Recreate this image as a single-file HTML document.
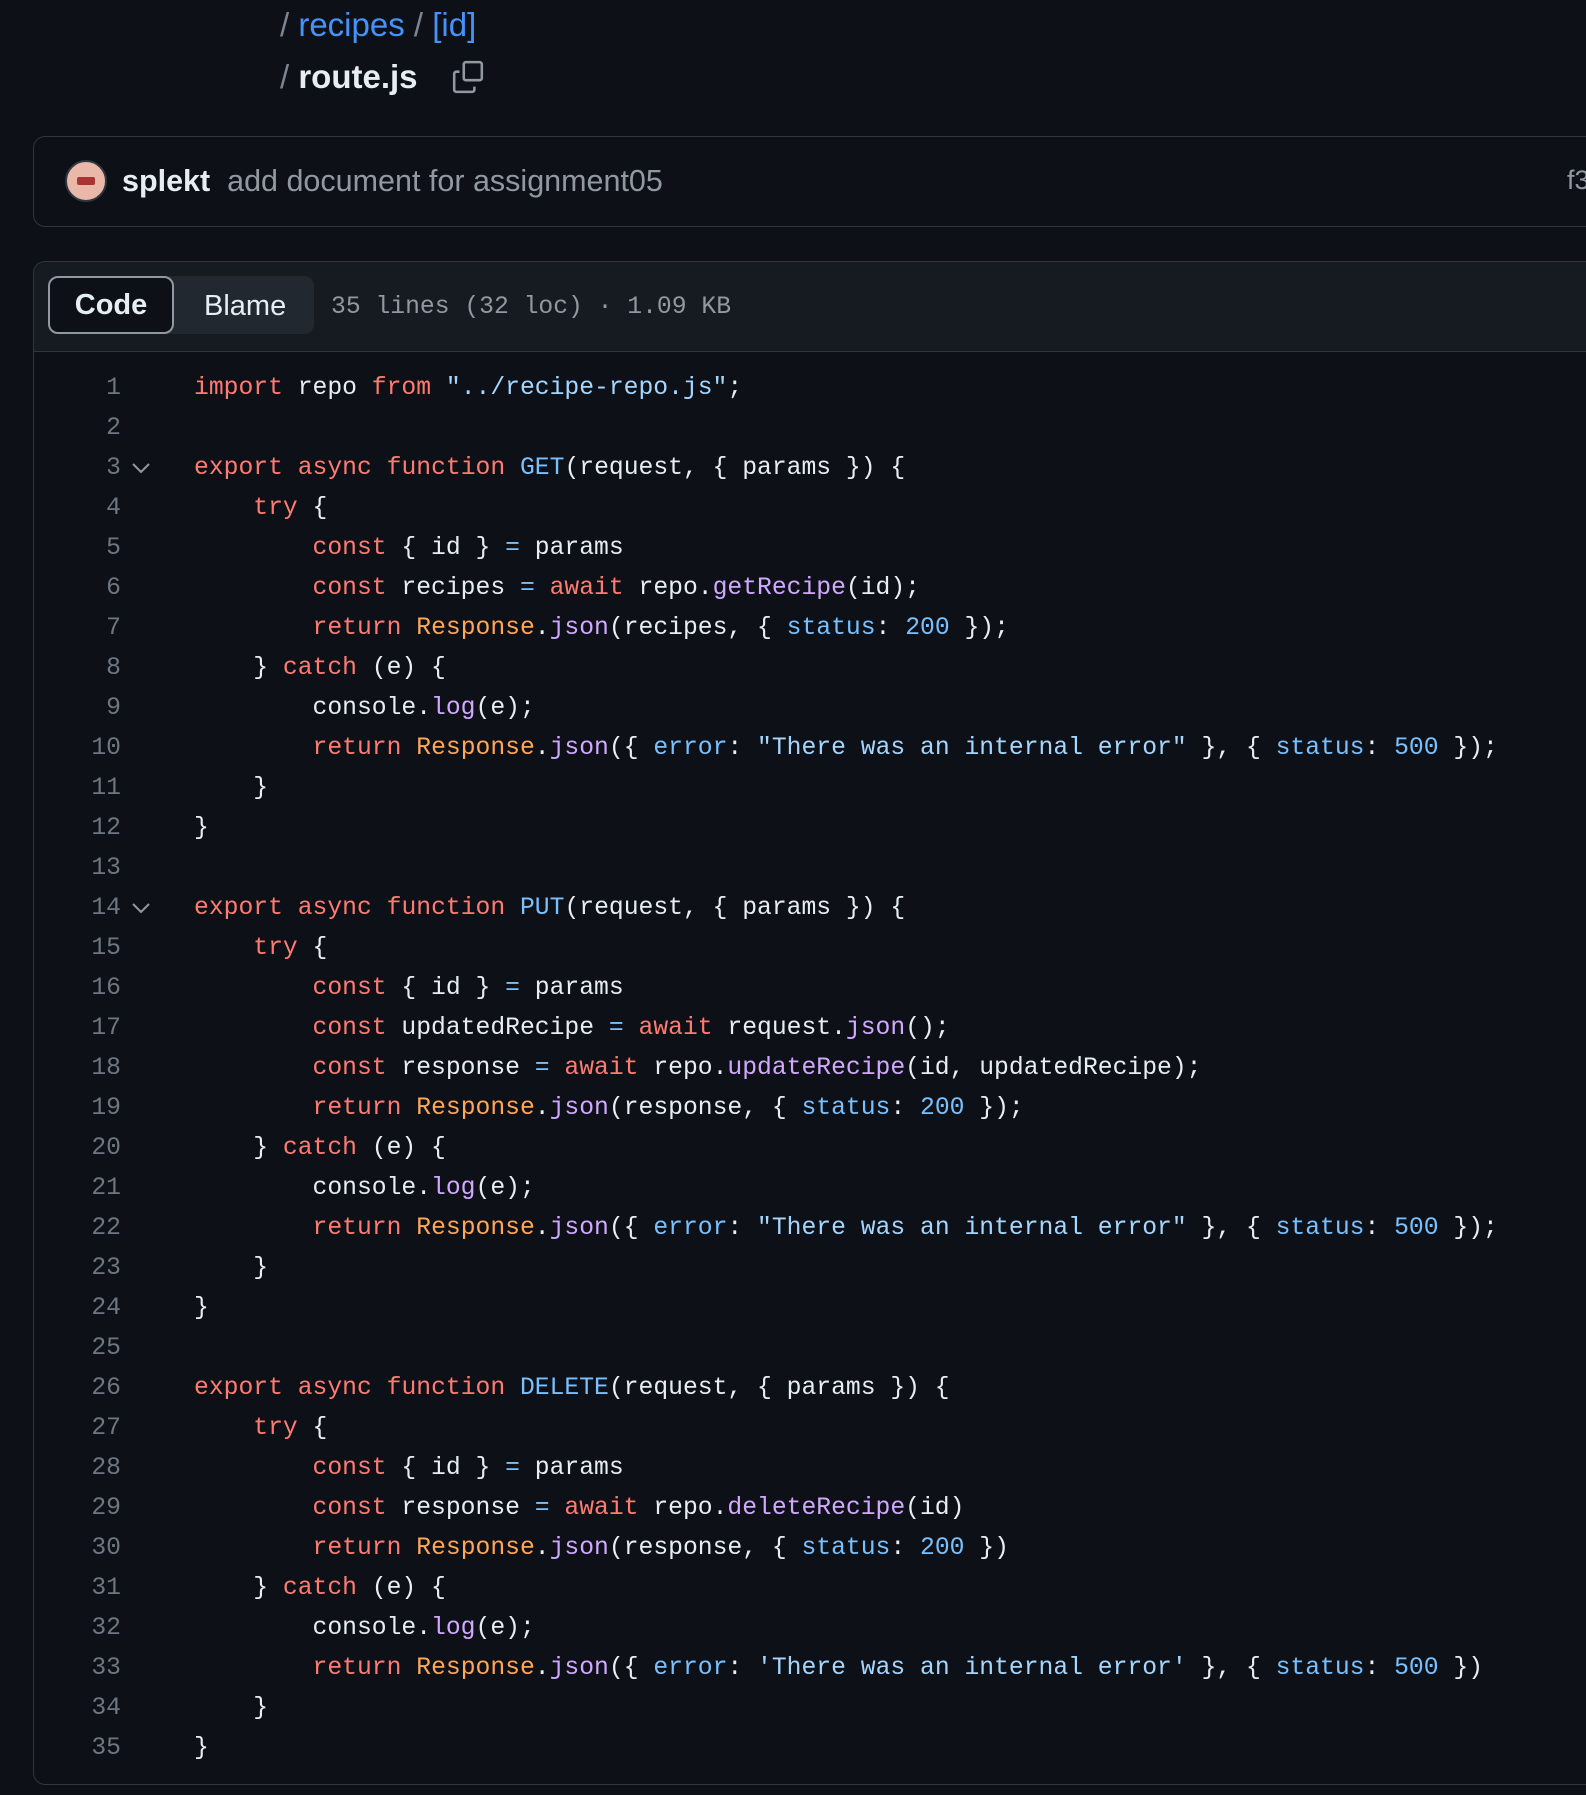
<!DOCTYPE html>
<html><head><meta charset="utf-8"><style>
*{margin:0;padding:0;box-sizing:border-box}
body{width:1586px;height:1795px;background:#0d1117;overflow:hidden;position:relative;font-family:"Liberation Sans",sans-serif;color:#e6edf3}
.abs{position:absolute;white-space:pre}
.crumb{font-size:33px;line-height:40px}
.sep{color:#7d8590}
.lnk{color:#4493f8}
.box1{position:absolute;left:33px;top:136px;width:1600px;height:91px;border:1.5px solid #30363d;border-radius:12px}
.box2{position:absolute;left:33px;top:261px;width:1600px;height:1524px;border:1.5px solid #30363d;border-radius:12px;overflow:hidden}
.hdr{position:absolute;left:0;top:0;right:0;height:90px;background:#161b22;border-bottom:1.5px solid #30363d}
.code{font-family:"Liberation Mono",monospace;font-size:24.7px;line-height:40px}
.ln{position:absolute;left:0;top:0;width:89px;text-align:right;color:#6e7681}
.k{color:#ff7b72}.s{color:#a5d6ff}.b{color:#79c0ff}.p{color:#d2a8ff}.o{color:#ffa657}
</style></head><body>
<div class="abs crumb" style="left:280px;top:5px"><span class="sep">/ </span><span class="lnk">recipes</span><span class="sep"> / </span><span class="lnk">[id]</span></div>
<div class="abs crumb" style="left:280px;top:57px"><span class="sep">/ </span><b>route.js</b></div>
<svg class="abs" style="left:451px;top:60px" width="34" height="34" viewBox="0 0 16 16" fill="none" stroke="#9198a1" stroke-width="1.2"><rect x="6" y="1" width="8.5" height="8.5" rx="1"/><path d="M4 5.5H2.5a1 1 0 0 0-1 1V14a1 1 0 0 0 1 1H10a1 1 0 0 0 1-1v-1.5"/></svg>
<div class="box1"></div>
<div class="abs" style="left:65px;top:160px;width:42px;height:42px;border-radius:50%;background:#e9b8a8;border:2px solid #30363d"><div style="position:absolute;left:10px;top:15px;width:18px;height:8px;background:#a33;border-radius:2px"></div></div>
<div class="abs" style="left:122px;top:162px;font-size:30.5px;line-height:38px"><b>splekt</b>  <span style="color:#9198a1">add document for assignment05</span></div>
<div class="abs" style="left:1567px;top:165px;font-size:27px;color:#9198a1">f3</div>
<div class="box2"><div class="hdr"></div></div>
<div class="abs" style="left:48px;top:276px;width:266px;height:58px;background:#212830;border-radius:10px"></div>
<div class="abs" style="left:48px;top:276px;width:126px;height:58px;background:#0d1117;border:2px solid #9198a1;border-radius:10px;font-size:29px;font-weight:bold;line-height:54px;text-align:center">Code</div>
<div class="abs" style="left:204px;top:277px;font-size:29px;line-height:58px">Blame</div>
<div class="abs code" style="left:331px;top:287px;color:#9198a1">35 lines (32 loc) · 1.09 KB</div>
<svg class="abs" style="left:131px;top:460px" width="22" height="720"><g fill="none" stroke="#9198a1" stroke-width="2"><path d="M2 4l8 8 8-8"/><path d="M2 444l8 8 8-8"/><path d="M2 924l8 8 8-8"/></g></svg>
<div class="abs code" style="left:32px;top:368px"><div class="ln">1
2
3
4
5
6
7
8
9
10
11
12
13
14
15
16
17
18
19
20
21
22
23
24
25
26
27
28
29
30
31
32
33
34
35</div><div style="position:absolute;left:162px;top:0"><span class="k">import</span> repo <span class="k">from</span> <span class="s">"../recipe-repo.js"</span>;

<span class="k">export</span> <span class="k">async</span> <span class="k">function</span> <span class="b">GET</span>(request, { params }) {
    <span class="k">try</span> {
        <span class="k">const</span> { id } <span class="b">=</span> params
        <span class="k">const</span> recipes <span class="b">=</span> <span class="k">await</span> repo.<span class="p">getRecipe</span>(id);
        <span class="k">return</span> <span class="o">Response</span>.<span class="p">json</span>(recipes, { <span class="b">status</span>: <span class="b">200</span> });
    } <span class="k">catch</span> (e) {
        console.<span class="p">log</span>(e);
        <span class="k">return</span> <span class="o">Response</span>.<span class="p">json</span>({ <span class="b">error</span>: <span class="s">"There was an internal error"</span> }, { <span class="b">status</span>: <span class="b">500</span> });
    }
}

<span class="k">export</span> <span class="k">async</span> <span class="k">function</span> <span class="b">PUT</span>(request, { params }) {
    <span class="k">try</span> {
        <span class="k">const</span> { id } <span class="b">=</span> params
        <span class="k">const</span> updatedRecipe <span class="b">=</span> <span class="k">await</span> request.<span class="p">json</span>();
        <span class="k">const</span> response <span class="b">=</span> <span class="k">await</span> repo.<span class="p">updateRecipe</span>(id, updatedRecipe);
        <span class="k">return</span> <span class="o">Response</span>.<span class="p">json</span>(response, { <span class="b">status</span>: <span class="b">200</span> });
    } <span class="k">catch</span> (e) {
        console.<span class="p">log</span>(e);
        <span class="k">return</span> <span class="o">Response</span>.<span class="p">json</span>({ <span class="b">error</span>: <span class="s">"There was an internal error"</span> }, { <span class="b">status</span>: <span class="b">500</span> });
    }
}

<span class="k">export</span> <span class="k">async</span> <span class="k">function</span> <span class="b">DELETE</span>(request, { params }) {
    <span class="k">try</span> {
        <span class="k">const</span> { id } <span class="b">=</span> params
        <span class="k">const</span> response <span class="b">=</span> <span class="k">await</span> repo.<span class="p">deleteRecipe</span>(id)
        <span class="k">return</span> <span class="o">Response</span>.<span class="p">json</span>(response, { <span class="b">status</span>: <span class="b">200</span> })
    } <span class="k">catch</span> (e) {
        console.<span class="p">log</span>(e);
        <span class="k">return</span> <span class="o">Response</span>.<span class="p">json</span>({ <span class="b">error</span>: <span class="s">'There was an internal error'</span> }, { <span class="b">status</span>: <span class="b">500</span> })
    }
}</div></div>
</body></html>
